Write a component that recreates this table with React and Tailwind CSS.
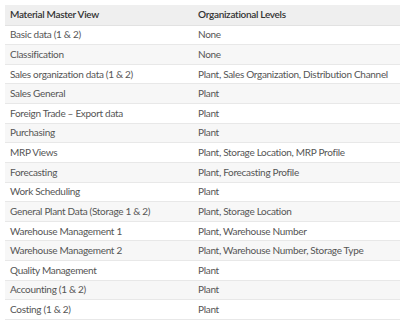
const rows = [
  ['Basic data (1 & 2)', 'None'],
  ['Classification', 'None'],
  ['Sales organization data (1 & 2)', 'Plant, Sales Organization, Distribution Channel'],
  ['Sales General', 'Plant'],
  ['Foreign Trade \u2013 Export data', 'Plant'],
  ['Purchasing', 'Plant'],
  ['MRP Views', 'Plant, Storage Location, MRP Profile'],
  ['Forecasting', 'Plant, Forecasting Profile'],
  ['Work Scheduling', 'Plant'],
  ['General Plant Data (Storage 1 & 2)', 'Plant, Storage Location'],
  ['Warehouse Management 1', 'Plant, Warehouse Number'],
  ['Warehouse Management 2', 'Plant, Warehouse Number, Storage Type'],
  ['Quality Management', 'Plant'],
  ['Accounting (1 & 2)', 'Plant'],
  ['Costing (1 & 2)', 'Plant'],
];

export default function App() {
  return (
    <div className="w-[400px] h-[327px] bg-white pt-[5px] pl-[5px] overflow-hidden font-['Lato',sans-serif] text-[10px] tracking-[-0.3px]">
      <table className="w-[395px] border-collapse table-fixed">
        <thead>
          <tr className="h-[20px] bg-[#efefef] border-b border-[#e2e2e2]">
            <th className="w-[188px] text-left font-semibold text-[#333] pl-[5px]">Material Master View</th>
            <th className="text-left font-semibold text-[#333] pl-[5px]">Organizational Levels</th>
          </tr>
        </thead>
        <tbody>
          {rows.map(([view, levels], i) => (
            <tr
              key={view}
              className={`h-[19.64px] border-b border-[#e8e8e8] ${i % 2 === 1 ? 'bg-[#f7f7f7]' : 'bg-white'}`}
            >
              <td className="pl-[5px] text-[#555] whitespace-nowrap">{view}</td>
              <td className="pl-[5px] text-[#555] whitespace-nowrap">{levels}</td>
            </tr>
          ))}
        </tbody>
      </table>
    </div>
  );
}
